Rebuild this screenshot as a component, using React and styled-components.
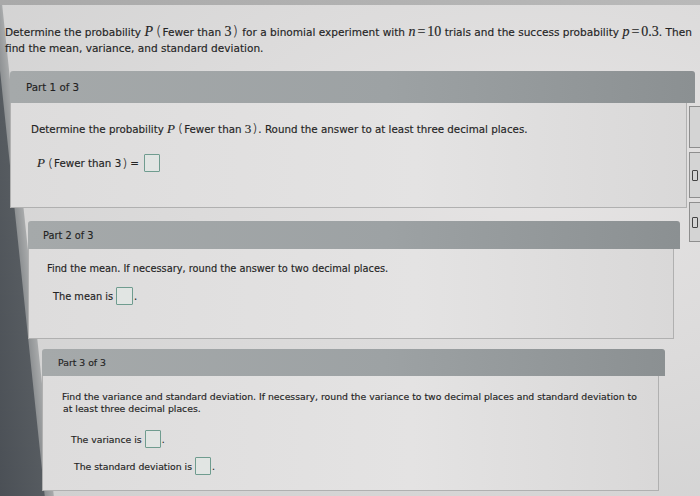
import React from "react";
import styled, { createGlobalStyle } from "styled-components";

const GlobalStyle = createGlobalStyle`
  html, body {
    margin: 0;
    padding: 0;
  }
  body {
    font-family: "DejaVu Sans", Verdana, sans-serif;
    color: #232323;
  }
`;

const Screen = styled.div`
  position: relative;
  width: 700px;
  height: 496px;
  overflow: hidden;
  -webkit-text-stroke: 0.15px #2a2a2a;
  background:
    linear-gradient(84deg, #4b5056 0, #565b60 44px, #8f9294 45px, #a7a9aa 53px, transparent 54px),
    radial-gradient(ellipse at 75% 35%, #e6e4e4 0%, #dcdbdb 45%, #cfcfcf 100%);
`;

const TopBar = styled.div`
  height: 5px;
  background: linear-gradient(to right, #a9a9a9, #b9b9b9);
`;

const Prompt = styled.div`
  margin: 18px 0 0 5px;
  font-size: 10.55px;
  line-height: 16px;
  white-space: nowrap;
`;

const MathVar = styled.span`
  font-family: "Liberation Serif", "Times New Roman", serif;
  font-style: italic;
  font-size: ${(p) => p.size || 14}px;
  margin-right: ${(p) => p.after || 0}px;
`;

const MathNum = styled.span`
  font-family: "Liberation Serif", "Times New Roman", serif;
  font-size: ${(p) => p.size || 14}px;
`;

const Paren = styled.span`
  font-size: ${(p) => p.size || 14}px;
  font-weight: 300;
  margin: 0 1px;
`;

const Eq = styled.span`
  margin: 0 2px;
`;

const Part = styled.section`
  margin: ${(p) => p.top}px ${(p) => p.right}px 0 ${(p) => p.left}px;
  font-size: ${(p) => p.fs}px;
`;

const PartHeader = styled.div`
  height: ${(p) => p.h}px;
  display: flex;
  align-items: center;
  padding-left: ${(p) => p.pad}px;
  border-radius: 3px 3px 0 0;
  background: linear-gradient(to right, #a5a9aa 0%, #9da2a4 55%, #8b9092 100%);
  color: #1e1e1e;
`;

const PartBody = styled.div`
  height: ${(p) => p.h}px;
  box-sizing: border-box;
  padding-top: ${(p) => p.padTop}px;
  border: 1px solid #b0b0b0;
  border-top: none;
  margin-right: ${(p) => p.shrink || 0}px;
  background: linear-gradient(to right, #dddcdc, #e4e3e3 60%, #d9d8d8);
`;

const Line = styled.div`
  padding-left: ${(p) => p.indent}px;
  line-height: ${(p) => p.lh || 14}px;
  margin-bottom: ${(p) => p.gap || 0}px;
  white-space: nowrap;
`;

const AnswerRow = styled.div`
  display: flex;
  align-items: center;
  padding-left: ${(p) => p.indent}px;
  height: 20px;
  margin-bottom: ${(p) => p.gap || 0}px;
  white-space: nowrap;
`;

const AnswerBox = styled.span`
  display: inline-block;
  width: ${(p) => p.w || 16}px;
  height: 18px;
  margin: 0 1px 0 3px;
  box-sizing: border-box;
  border: 1px solid #6f9c8f;
  border-radius: 1px;
  background: #e1e5e3;
  -webkit-text-stroke: 0;
`;

const SideTools = styled.div`
  position: absolute;
  right: 0;
  top: 106px;
  width: 11px;
  display: flex;
  flex-direction: column;
  gap: 4px;
`;

const SideButton = styled.div`
  height: ${(p) => p.h}px;
  box-sizing: border-box;
  border: 1px solid #8e8e8e;
  border-right: none;
  background: #d4d4d4;
  display: flex;
  align-items: center;
  padding-left: 2px;
`;

const Glyph = styled.span`
  display: block;
  width: 4px;
  height: 9px;
  border: 1px solid #444;
  border-radius: 1px;
`;

export default function App() {
  return (
    <Screen>
      <GlobalStyle />
      <TopBar />
      <Prompt>
        <div>
          Determine the probability <MathVar after={2}>P</MathVar>
          <Paren>(</Paren>Fewer than <MathNum>3</MathNum>
          <Paren>)</Paren> for a binomial experiment with <MathVar>n</MathVar>
          <Eq><MathNum>=</MathNum></Eq><MathNum>10</MathNum> trials and the success probability{" "}
          <MathVar>p</MathVar>
          <Eq><MathNum>=</MathNum></Eq><MathNum>0.3</MathNum>. Then
        </div>
        <div>find the mean, variance, and standard deviation.</div>
      </Prompt>

      <Part top={15} left={10} right={5} fs={10.3}>
        <PartHeader h={32} pad={16}>Part 1 of 3</PartHeader>
        <PartBody h={105} padTop={17} shrink={8}>
          <Line indent={20} lh={18} gap={15}>
            Determine the probability <MathVar size={13} after={2}>P</MathVar>
            <Paren size={13}>(</Paren>Fewer than <MathNum size={13}>3</MathNum>
            <Paren size={13}>)</Paren>. Round the answer to at least three decimal places.
          </Line>
          <AnswerRow indent={26}>
            <MathVar size={13} after={2}>P</MathVar>
            <Paren size={13}>(</Paren>Fewer than 3<Paren size={13}>)</Paren>
            <Eq>=</Eq>
            <AnswerBox />
          </AnswerRow>
        </PartBody>
      </Part>

      <Part top={13} left={28} right={20} fs={9.8}>
        <PartHeader h={28} pad={15}>Part 2 of 3</PartHeader>
        <PartBody h={90} padTop={13} shrink={6}>
          <Line indent={18} lh={14} gap={10}>
            Find the mean. If necessary, round the answer to two decimal places.
          </Line>
          <AnswerRow indent={24}>
            The mean is <AnswerBox w={17} />.
          </AnswerRow>
        </PartBody>
      </Part>

      <Part top={10} left={42} right={35} fs={9.3}>
        <PartHeader h={27} pad={16}>Part 3 of 3</PartHeader>
        <PartBody h={115} padTop={15} shrink={6}>
          <Line indent={19} lh={12}>
            Find the variance and standard deviation. If necessary, round the variance to two decimal places and standard deviation to
          </Line>
          <Line indent={20} lh={12} gap={14}>
            at least three decimal places.
          </Line>
          <AnswerRow indent={28} gap={7}>
            The variance is <AnswerBox />.
          </AnswerRow>
          <AnswerRow indent={31}>
            The standard deviation is <AnswerBox />.
          </AnswerRow>
        </PartBody>
      </Part>

      <SideTools>
        <SideButton h={42} />
        <SideButton h={46}>
          <Glyph />
        </SideButton>
        <SideButton h={40}>
          <Glyph />
        </SideButton>
      </SideTools>
    </Screen>
  );
}
